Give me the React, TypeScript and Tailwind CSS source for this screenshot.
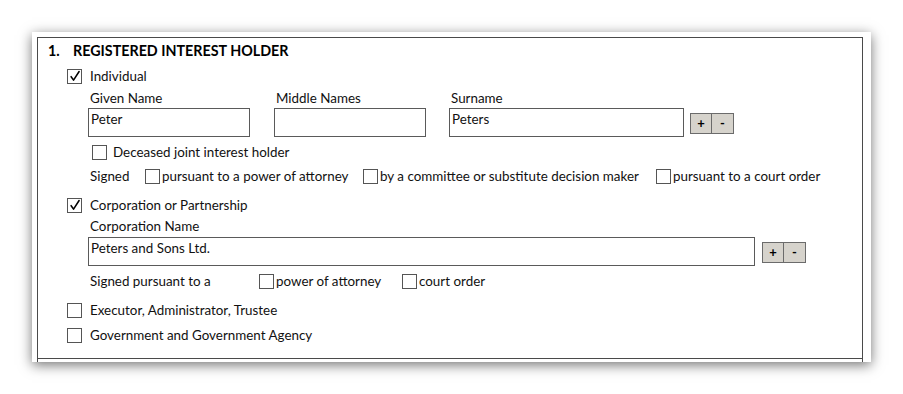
import React from 'react';

const Check = () => (
  <svg viewBox="0 0 14 14" className="w-[12px] h-[12px]">
    <path d="M2.5 7.8 L5.3 11.8 L11.8 1.8" fill="none" stroke="#000" strokeWidth="1.8" strokeLinecap="round" strokeLinejoin="round" />
  </svg>
);

const Box: React.FC<{ checked?: boolean; className?: string }> = ({ checked, className = '' }) => (
  <span
    className={`inline-flex items-center justify-center w-[15px] h-[15px] shrink-0 border border-[#555] bg-white ${className}`}
  >
    {checked && <Check />}
  </span>
);

const Field: React.FC<{ value?: string; className?: string }> = ({ value = '', className = '' }) => (
  <div className={`h-[29px] border border-[#5a5a5a] bg-white px-[2px] pt-[2px] leading-[17px] ${className}`}>{value}</div>
);

const PlusMinus: React.FC<{ className?: string }> = ({ className = '' }) => (
  <div className={`flex h-[21px] ${className}`}>
    <button className="w-[22px] h-full bg-[#d6d3cc] border border-[#6b6b6b] font-bold text-[13px] leading-none text-black">+</button>
    <button className="w-[22px] h-full bg-[#d6d3cc] border border-l-0 border-[#6b6b6b] font-bold text-[13px] leading-none text-black">-</button>
  </div>
);

const Row: React.FC<{ children: React.ReactNode; className?: string }> = ({ children, className = '' }) => (
  <div className={`flex items-center h-[16px] ${className}`}>{children}</div>
);

export default function App() {
  return (
    <div className="w-[903px] h-[394px] bg-white pt-[32px] pl-[32px] text-[13.4px] text-[#111]" style={{ fontFamily: 'Lato, "Liberation Sans", sans-serif' }}>
      <div className="w-[839px] h-[330px] bg-white overflow-hidden pt-[5px] pl-[5px] shadow-[0_3px_12px_rgba(0,0,0,0.55)]">
        <div className="w-[826px] h-[340px] border border-b-0 border-[#4a4a4a]">
          <div className="border-b border-[#4a4a4a] h-[321px]">
            <div className="flex items-center h-[25px] pl-[10px] text-[14.3px] font-bold text-black">
              <span className="w-[25px]">1.</span>
              <span>REGISTERED INTEREST HOLDER</span>
            </div>

            <Row className="mt-[5px] ml-[29px]">
              <Box checked />
              <span className="ml-[8px]">Individual</span>
            </Row>

            <div className="ml-[50px]">
              <div className="flex mt-[6px] h-[16px] items-center">
                <span className="w-[186px] pl-[2px]">Given Name</span>
                <span className="w-[175px] pl-[2px]">Middle Names</span>
                <span className="pl-[2px]">Surname</span>
              </div>
              <div className="flex items-center mt-[2px]">
                <Field value="Peter" className="w-[162px]" />
                <Field className="w-[152px] ml-[24px]" />
                <Field value="Peters" className="w-[235px] ml-[23px]" />
                <PlusMinus className="ml-[6px] mt-[2px]" />
              </div>
            </div>

            <Row className="mt-[7px] ml-[54px]">
              <Box />
              <span className="ml-[6px]">Deceased joint interest holder</span>
            </Row>

            <Row className="mt-[8px] ml-[52px]">
              <span className="w-[55px]">Signed</span>
              <span className="w-[218px] flex items-center">
                <Box />
                <span className="ml-[2px]">pursuant to a power of attorney</span>
              </span>
              <span className="w-[293px] flex items-center">
                <Box />
                <span className="ml-[2px]">by a committee or substitute decision maker</span>
              </span>
              <span className="flex items-center">
                <Box />
                <span className="ml-[2px]">pursuant to a court order</span>
              </span>
            </Row>

            <Row className="mt-[13px] ml-[29px]">
              <Box checked />
              <span className="ml-[8px]">Corporation or Partnership</span>
            </Row>

            <div className="ml-[50px]">
              <Row className="mt-[5px]">
                <span className="pl-[2px]">Corporation Name</span>
              </Row>
              <div className="flex items-center mt-[3px]">
                <Field value="Peters and Sons Ltd." className="w-[667px]" />
                <PlusMinus className="ml-[7px] mt-[2px]" />
              </div>
              <Row className="mt-[7px]">
                <span className="w-[171px] pl-[2px]">Signed pursuant to a</span>
                <span className="w-[143px] flex items-center">
                  <Box />
                  <span className="ml-[2px]">power of attorney</span>
                </span>
                <span className="flex items-center">
                  <Box />
                  <span className="ml-[2px]">court order</span>
                </span>
              </Row>
            </div>

            <Row className="mt-[13px] ml-[29px]">
              <Box />
              <span className="ml-[8px]">Executor, Administrator, Trustee</span>
            </Row>
            <Row className="mt-[9px] ml-[29px]">
              <Box />
              <span className="ml-[8px]">Government and Government Agency</span>
            </Row>
          </div>
        </div>
      </div>
    </div>
  );
}
